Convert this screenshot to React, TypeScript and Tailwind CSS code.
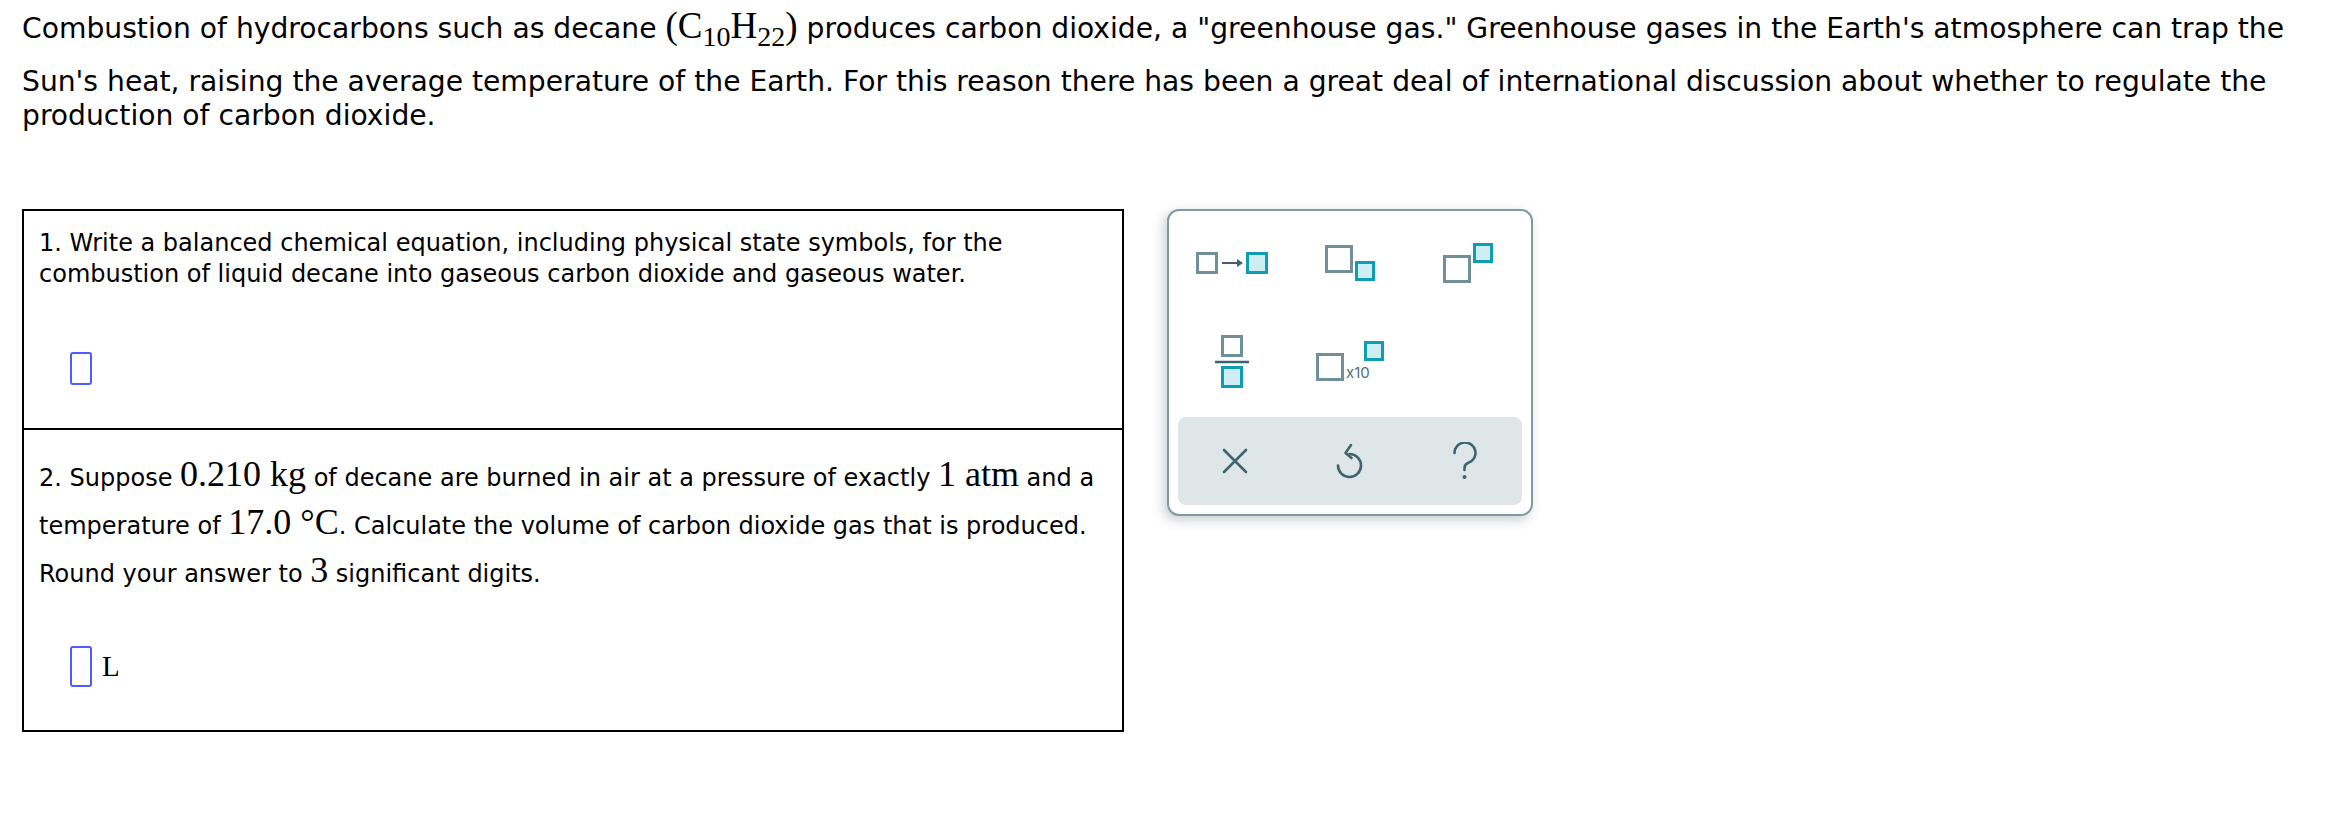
import React from 'react';

const GRAY = '#6f9099';
const TEAL = '#0e9db2';
const FILL = '#cdeef2';
const INK = '#3d6470';

function Box({ x, y, s, on }: { x: number; y: number; s: number; on?: boolean }) {
  return (
    <rect
      x={x + 1.5}
      y={y + 1.5}
      width={s - 3}
      height={s - 3}
      fill={on ? FILL : '#ffffff'}
      stroke={on ? TEAL : GRAY}
      strokeWidth={3}
    />
  );
}

function ArrowIcon() {
  return (
    <svg width="72" height="22" viewBox="0 0 72 22">
      <Box x={0} y={0} s={22} />
      <line x1="26" y1="11" x2="43" y2="11" stroke={INK} strokeWidth="2" />
      <polygon points="41,7 47,11 41,15" fill={INK} />
      <Box x={50} y={0} s={22} on />
    </svg>
  );
}

function SubIcon() {
  return (
    <svg width="50" height="36" viewBox="0 0 50 36">
      <Box x={0} y={0} s={28} />
      <Box x={30} y={16} s={20} on />
    </svg>
  );
}

function SupIcon() {
  return (
    <svg width="50" height="40" viewBox="0 0 50 40">
      <Box x={0} y={12} s={28} />
      <Box x={30} y={0} s={20} on />
    </svg>
  );
}

function FracIcon() {
  return (
    <svg width="34" height="53" viewBox="0 0 34 53">
      <Box x={6} y={0} s={22} />
      <line x1="0" y1="27" x2="34" y2="27" stroke={INK} strokeWidth="2.5" />
      <Box x={6} y={31} s={22} on />
    </svg>
  );
}

function SciIcon() {
  return (
    <svg width="68" height="40" viewBox="0 0 68 40">
      <Box x={0} y={12} s={28} />
      <text x="30" y="37" fontSize="15" fill="#4f6f79" fontFamily="Inter, 'DejaVu Sans', sans-serif">
        x10
      </text>
      <Box x={48} y={0} s={20} on />
    </svg>
  );
}

function ClearIcon() {
  return (
    <svg width="26" height="26" viewBox="0 0 26 26">
      <path d="M2 2 L24 24 M24 2 L2 24" stroke={INK} strokeWidth="2.6" strokeLinecap="round" fill="none" />
    </svg>
  );
}

function UndoIcon() {
  return (
    <svg width="28" height="36" viewBox="0 0 28 36">
      <path
        d="M2 22.5 A11.5 11.5 0 1 0 13.5 11"
        stroke={INK}
        strokeWidth="2.6"
        strokeLinecap="round"
        fill="none"
      />
      <path d="M15 2 L9.5 10 L15.5 15" stroke={INK} strokeWidth="2.6" strokeLinecap="round" strokeLinejoin="round" fill="none" />
    </svg>
  );
}

function HelpIcon() {
  return (
    <svg width="26" height="38" viewBox="0 0 26 38">
      <path
        d="M2.5 11 A10.5 10.5 0 1 1 16 21 C13.5 22 12.5 24 12.5 26 L12.5 28"
        stroke={INK}
        strokeWidth="2.6"
        strokeLinecap="round"
        fill="none"
      />
      <circle cx="12.5" cy="35" r="2" fill={INK} />
    </svg>
  );
}

function M({ children, size = 'text-[36px]' }: { children: React.ReactNode; size?: string }) {
  return <span className={`font-['Liberation_Serif',serif] ${size}`}>{children}</span>;
}

function Sub({ children }: { children: React.ReactNode }) {
  return <span className="text-[28px] leading-[57px] align-[-8px]">{children}</span>;
}

function Blank({ h }: { h: string }) {
  return <div className={`w-[22px] ${h} border-2 border-[#4c5cff] rounded-[3px]`} />;
}

function Palette() {
  return (
    <div className="w-[366px] rounded-[12px] border-2 border-[#7f9aa3] bg-white shadow-[-3px_4px_12px_rgba(40,60,70,0.25)] px-[4px] pt-[3px] pb-[9px]">
      <div className="grid grid-cols-3">
        <div className="h-[98px] flex items-center justify-center"><ArrowIcon /></div>
        <div className="h-[98px] flex items-center justify-center"><SubIcon /></div>
        <div className="h-[98px] flex items-center justify-center"><SupIcon /></div>
        <div className="h-[98px] flex items-center justify-center"><FracIcon /></div>
        <div className="h-[98px] flex items-center justify-center"><SciIcon /></div>
        <div className="h-[98px]" />
      </div>
      <div className="mx-[5px] mt-[7px] h-[88px] rounded-[8px] bg-[#dfe6e8] grid grid-cols-3">
        <div className="flex items-center justify-center"><ClearIcon /></div>
        <div className="flex items-center justify-center"><UndoIcon /></div>
        <div className="flex items-center justify-center"><HelpIcon /></div>
      </div>
    </div>
  );
}

export default function App() {
  return (
    <div className="min-h-screen bg-white text-black font-['DejaVu_Sans',Verdana,sans-serif] pl-[22px] pt-[8px]">
      <p className="text-[28.2px] leading-[34px] whitespace-nowrap">
        Combustion of hydrocarbons such as decane{' '}
        <M size="text-[37px]">
          (C<Sub>10</Sub>H<Sub>22</Sub>)
        </M>{' '}
        produces carbon dioxide, a "greenhouse gas." Greenhouse gases in the Earth's atmosphere can trap the
        <br />
        Sun's heat, raising the average temperature of the Earth. For this reason there has been a great deal of
        international discussion about whether to regulate the
        <br />
        production of carbon dioxide.
      </p>

      <div className="flex items-start gap-[43px] mt-[76px]">
        <div className="w-[1102px] border-2 border-black">
          <div className="h-[217px] pl-[15px] pt-[17px]">
            <p className="text-[24px] leading-[31px] whitespace-nowrap">
              1. Write a balanced chemical equation, including physical state symbols, for the
              <br />
              combustion of liquid decane into gaseous carbon dioxide and gaseous water.
            </p>
            <div className="mt-[62px] ml-[31px]">
              <Blank h="h-[33px]" />
            </div>
          </div>
          <div className="h-[302px] border-t-2 border-black pl-[15px] pt-[22px]">
            <p className="text-[24px] leading-[44px] whitespace-nowrap">
              2. Suppose <M>0.210 kg</M> of decane are burned in air at a pressure of exactly <M>1 atm</M> and a
              <br />
              temperature of <M>17.0 °C</M>. Calculate the volume of carbon dioxide gas that is produced.
              <br />
              Round your answer to <M>3</M> significant digits.
            </p>
            <div className="mt-[49px] ml-[31px] flex items-center gap-[10px]">
              <Blank h="h-[41px]" />
              <M size="text-[29px]">L</M>
            </div>
          </div>
        </div>
        <Palette />
      </div>
    </div>
  );
}
